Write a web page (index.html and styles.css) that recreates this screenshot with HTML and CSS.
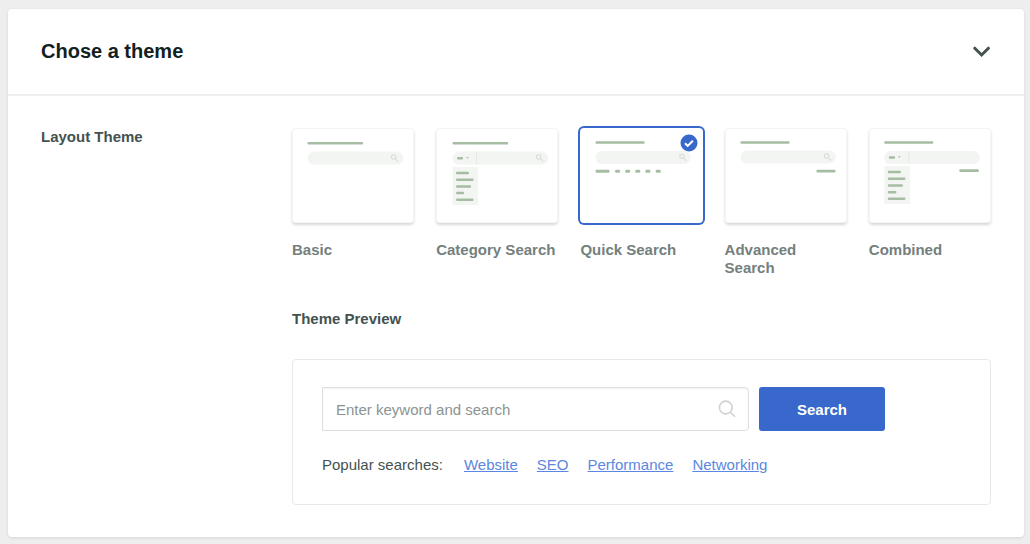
FILE: index.html
```html
<!DOCTYPE html>
<html lang="en">
<head>
    <meta charset="UTF-8">
    <meta name="viewport" content="width=device-width, initial-scale=1.0">
    <title>Chose a theme</title>
    <link rel="stylesheet" href="styles.css">
</head>
<body>
    <main class="panel">
        <header class="panel-header">
            <h1 class="panel-title">Chose a theme</h1>
            <button class="toggle" type="button" aria-label="Toggle section">
                <svg width="18" height="12" viewBox="0 0 18 12"><path d="M1.8 2.2l6.8 6.8 6.8-6.8" fill="none" stroke="#44524f" stroke-width="3" stroke-linecap="round"/></svg>
            </button>
        </header>
        <div class="panel-body">
            <h2 class="label" id="layout-label">Layout Theme</h2>
            <div class="settings">
                <div class="themes" role="radiogroup" aria-labelledby="layout-label">
                    <label class="theme">
                        <input class="theme-radio" type="radio" name="theme" value="basic">
                        <span class="thumb">
                            <svg class="sketch" viewBox="0 0 122 95">
                                <rect class="line" x="15.5" y="14" width="55.5" height="2.5" rx="1"/>
                                <rect class="bar" x="15.5" y="23.5" width="95.5" height="13" rx="6.5"/>
                                <g class="lens"><circle cx="101.5" cy="29" r="2.2"/><path d="M103.2 30.7l2.8 2.8"/></g>
                            </svg>
                        </span>
                        <span class="theme-name">Basic</span>
                    </label>
                    <label class="theme">
                        <input class="theme-radio" type="radio" name="theme" value="category">
                        <span class="thumb">
                            <svg class="sketch" viewBox="0 0 122 95">
                                <rect class="line" x="16.5" y="14" width="55.5" height="2.5" rx="1"/>
                                <rect class="bar" x="16.5" y="23.5" width="95.5" height="13" rx="6.5"/>
                                <rect class="line" x="21" y="29" width="6" height="2.5" rx="1"/>
                                <path class="caret" d="M30 29h3l-1.5 1.8z"/>
                                <path class="divider" d="M40.5 23.5v13"/>
                                <g class="lens"><circle cx="102.5" cy="29" r="2.2"/><path d="M104.2 30.7l2.8 2.8"/></g>
                                <rect class="bar" x="16.5" y="39" width="25.5" height="38" rx="1"/>
                                <rect class="line" x="20" y="43.7" width="13" height="2.5" rx="1"/>
                                <rect class="line" x="20" y="50.4" width="17.5" height="2.5" rx="1"/>
                                <rect class="line" x="20" y="57.1" width="15" height="2.5" rx="1"/>
                                <rect class="line" x="20" y="63.7" width="8" height="2.5" rx="1"/>
                                <rect class="line" x="20" y="70.4" width="17.5" height="2.5" rx="1"/>
                            </svg>
                        </span>
                        <span class="theme-name">Category Search</span>
                    </label>
                    <label class="theme">
                        <input class="theme-radio" type="radio" name="theme" value="quick" checked>
                        <span class="thumb">
                            <svg class="sketch" viewBox="0 0 122 95">
                                <rect class="line" x="15.5" y="13.2" width="49" height="2.5" rx="1"/>
                                <rect class="bar" x="15.5" y="23" width="95" height="13" rx="6.5"/>
                                <g class="lens"><circle cx="101.8" cy="28.3" r="2.2"/><path d="M103.5 30l2.8 2.8"/></g>
                                <rect class="line" x="15.5" y="41.8" width="14" height="2.8" rx="1.2"/>
                                <rect class="line" x="35" y="41.8" width="5" height="2.8" rx="1.2"/>
                                <rect class="line" x="45.1" y="41.8" width="5" height="2.8" rx="1.2"/>
                                <rect class="line" x="55.2" y="41.8" width="5" height="2.8" rx="1.2"/>
                                <rect class="line" x="65.3" y="41.8" width="5" height="2.8" rx="1.2"/>
                                <rect class="line" x="75.6" y="41.8" width="5" height="2.8" rx="1.2"/>
                            </svg>
                            <svg class="check" viewBox="0 0 18 18"><circle cx="9" cy="9" r="8.5" fill="#3868cb"/><path d="M5 9.2l2.7 2.7 5.2-5.2" fill="none" stroke="#fff" stroke-width="2"/></svg>
                        </span>
                        <span class="theme-name">Quick Search</span>
                    </label>
                    <label class="theme">
                        <input class="theme-radio" type="radio" name="theme" value="advanced">
                        <span class="thumb">
                            <svg class="sketch" viewBox="0 0 122 95">
                                <rect class="line" x="15.5" y="13.2" width="49" height="2.5" rx="1"/>
                                <rect class="bar" x="15.5" y="22.5" width="95" height="13" rx="6.5"/>
                                <g class="lens"><circle cx="101.5" cy="28" r="2.2"/><path d="M103.2 29.7l2.8 2.8"/></g>
                                <rect class="line" x="91.3" y="41.6" width="19" height="2.8" rx="1"/>
                            </svg>
                        </span>
                        <span class="theme-name">Advanced Search</span>
                    </label>
                    <label class="theme">
                        <input class="theme-radio" type="radio" name="theme" value="combined">
                        <span class="thumb">
                            <svg class="sketch" viewBox="0 0 122 95">
                                <rect class="line" x="15.2" y="13.2" width="49" height="2.5" rx="1"/>
                                <rect class="bar" x="15.2" y="23" width="95.5" height="13" rx="6.5"/>
                                <rect class="line" x="19.8" y="28.2" width="6.2" height="2.5" rx="1"/>
                                <path class="caret" d="M28.8 28.2h3l-1.5 1.8z"/>
                                <path class="divider" d="M39.8 23v13"/>
                                <rect class="line" x="90.2" y="41.2" width="19.5" height="2.8" rx="1"/>
                                <rect class="bar" x="15.2" y="38" width="26" height="38" rx="1"/>
                                <rect class="line" x="18.8" y="42.8" width="13" height="2.5" rx="1"/>
                                <rect class="line" x="18.8" y="49.5" width="17.5" height="2.5" rx="1"/>
                                <rect class="line" x="18.8" y="56.2" width="15" height="2.5" rx="1"/>
                                <rect class="line" x="18.8" y="62.8" width="8.5" height="2.5" rx="1"/>
                                <rect class="line" x="18.8" y="69.5" width="17.5" height="2.5" rx="1"/>
                            </svg>
                        </span>
                        <span class="theme-name">Combined</span>
                    </label>
                </div>

                <h2 class="label preview-title">Theme Preview</h2>
                <section class="preview">
                    <form class="search">
                        <div class="search-field">
                            <input class="search-input" type="text" placeholder="Enter keyword and search" aria-label="Enter keyword and search">
                            <svg class="search-icon" viewBox="0 0 18 18"><circle cx="7.8" cy="7.5" r="6.4"/><path d="M12.4 12.2l4.6 4.6"/></svg>
                        </div>
                        <button class="search-button" type="button">Search</button>
                    </form>
                    <div class="popular">
                        <span class="popular-label">Popular searches:</span>
                        <a href="#">Website</a>
                        <a href="#">SEO</a>
                        <a href="#">Performance</a>
                        <a href="#">Networking</a>
                    </div>
                </section>
            </div>
        </div>
    </main>
</body>
</html>
```

FILE: styles.css
```css
* {
    box-sizing: border-box;
}
body {
    margin: 0;
    padding: 9px 6px 6px 8px;
    background-color: #eeeeef;
    font-family: 'Liberation Sans', Arial, sans-serif;
    font-size: 15px;
    line-height: 18px;
    color: #44524f;
}
.panel {
    background: #fff;
    border-radius: 4px;
    box-shadow: 0 1px 3px rgba(40, 50, 90, 0.12);
}
.panel-header {
    display: flex;
    align-items: center;
    justify-content: space-between;
    padding: 30px 33px;
    border-bottom: 2px solid #eeeeef;
}
.panel-title {
    margin: 0;
    font-size: 20px;
    line-height: 25px;
    color: #12211f;
}
.toggle {
    display: flex;
    padding: 0;
    border: none;
    background: none;
    cursor: pointer;
}
.panel-body {
    display: flex;
    padding: 32px 33px;
}
.label {
    flex: 0 0 251px;
    margin: 0;
    font-size: 15px;
    line-height: 18px;
}
.settings {
    flex: 1;
    min-width: 0;
}
.themes {
    display: grid;
    grid-template-columns: repeat(5, 1fr);
    gap: 22px;
}
.theme {
    position: relative;
    cursor: pointer;
}
.theme-radio {
    position: absolute;
    opacity: 0;
    margin: 0;
}
.thumb {
    display: block;
    position: relative;
    border-radius: 4px;
    box-shadow: inset 0 0 0 1px #f4f4f4, 0 2px 3px rgba(0, 0, 0, 0.16);
}
.theme-radio:checked + .thumb {
    box-shadow: 0 0 0 2px #3868cb;
}
.sketch {
    display: block;
    width: 100%;
}
.line {
    fill: #a6bda4;
}
.bar {
    fill: #f2f5f2;
}
.lens {
    fill: none;
    stroke: #d5ddd4;
    stroke-width: 1;
}
.caret {
    fill: #b4c4b2;
}
.divider {
    stroke: #e4e9e3;
}
.check {
    display: none;
    position: absolute;
    top: 6px;
    right: 5px;
    width: 18px;
    height: 18px;
}
.theme-radio:checked + .thumb .check {
    display: block;
}
.theme-name {
    display: block;
    margin-top: 18px;
    font-weight: bold;
    color: #74807d;
}
.preview-title {
    margin: 33px 0 31px;
}
.preview {
    padding: 27px 29px 30px;
    border: 1px solid #e8e8e9;
    border-radius: 4px;
}
.search {
    display: flex;
    gap: 10px;
    max-width: 563px;
}
.search-field {
    position: relative;
    flex: 1;
}
.search-input {
    display: block;
    width: 100%;
    height: 44px;
    padding: 0 44px 0 13px;
    border: 1px solid #dedfe0;
    border-radius: 0 4px 4px 0;
    box-shadow: inset 0 1px 2px rgba(0, 0, 0, 0.06);
    font: inherit;
    color: #44524f;
}
.search-input::placeholder {
    color: #8b9491;
    opacity: 1;
}
.search-icon {
    position: absolute;
    top: 13px;
    right: 13px;
    width: 18px;
    height: 18px;
    fill: none;
    stroke: #d0d1d1;
    stroke-width: 1.6;
    pointer-events: none;
}
.search-button {
    width: 126px;
    border: none;
    border-radius: 3px;
    background: #3868cb;
    color: #fff;
    font-family: inherit;
    font-size: 15px;
    font-weight: bold;
    cursor: pointer;
}
.popular {
    display: flex;
    flex-wrap: wrap;
    gap: 19px;
    margin-top: 25px;
}
.popular-label {
    margin-right: 2px;
}
.popular a {
    color: #5b87e0;
}
```
